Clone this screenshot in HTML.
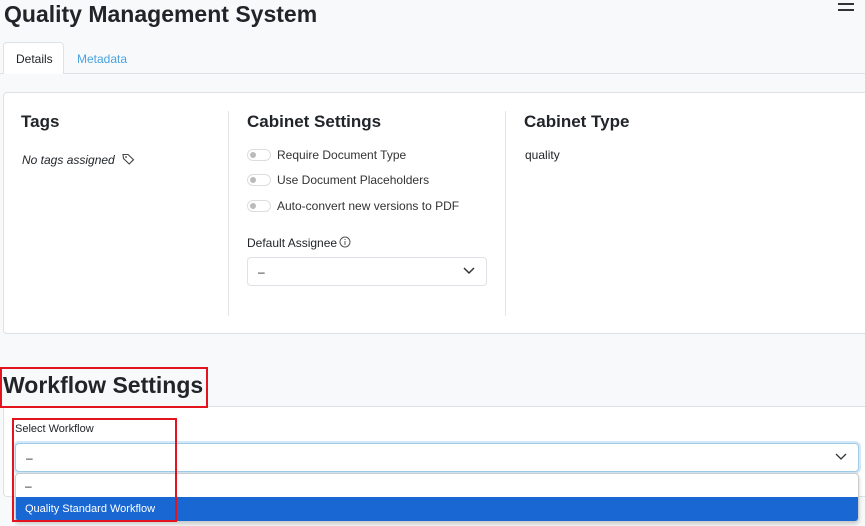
<!DOCTYPE html>
<html><head><style>
*{box-sizing:border-box;margin:0;padding:0}
body{width:865px;height:526px;overflow:hidden;background:#f8f9fa;font-family:"Liberation Sans",sans-serif;color:#212529;position:relative}
.abs{position:absolute}
h1{position:absolute;left:4px;top:1px;font-size:23px;font-weight:600;letter-spacing:0px}
.tog{position:absolute;left:247px;width:24px;height:12px;border:1px solid #ddd;border-radius:7px;background:#fff}
.tog:after{content:"";position:absolute;left:2px;top:2px;width:6px;height:6px;border-radius:50%;background:#bbb}
.lbl{position:absolute;left:277px;font-size:12px;color:#333}
</style></head><body>
<h1>Quality Management System</h1>
<div class="abs" style="left:838px;top:3px;width:16px;height:1.5px;background:#333"></div>
<div class="abs" style="left:838px;top:9px;width:16px;height:1.5px;background:#333"></div>
<div class="abs" style="left:0;top:73px;width:865px;height:1px;background:#dee2e6"></div>
<div class="abs" style="left:3px;top:42px;width:61px;height:32px;background:#fff;border:1px solid #dee2e6;border-bottom:none;border-radius:4px 4px 0 0;font-size:12px;padding:9px 0 0 12px">Details</div>
<div class="abs" style="left:77px;top:52px;font-size:12px;color:#4aa3df">Metadata</div>
<div class="abs" style="left:3px;top:92px;width:870px;height:242px;background:#fff;border:1px solid #dee2e6;border-radius:4px"></div>
<div class="abs" style="left:21px;top:112px;font-size:17px;font-weight:600">Tags</div>
<div class="abs" style="left:22px;top:153px;font-size:12px;font-style:italic">No tags assigned</div>
<svg class="abs" style="left:122px;top:153px" width="13" height="12" viewBox="0 0 13 12"><path d="M1 1.5h5l5.5 5.2-4.3 4.3L1.5 5.5z" fill="none" stroke="#444" stroke-width="1.1"/><circle cx="4" cy="4" r=".9" fill="#444"/></svg>
<div class="abs" style="left:228px;top:111px;width:1px;height:205px;background:#e5e5e5"></div>
<div class="abs" style="left:505px;top:111px;width:1px;height:205px;background:#e5e5e5"></div>
<div class="abs" style="left:247px;top:112px;font-size:17px;font-weight:600">Cabinet Settings</div>
<div class="tog" style="top:149px"></div><div class="lbl" style="top:148px">Require Document Type</div>
<div class="tog" style="top:174px"></div><div class="lbl" style="top:173px">Use Document Placeholders</div>
<div class="tog" style="top:200px"></div><div class="lbl" style="top:199px">Auto-convert new versions to PDF</div>
<div class="abs" style="left:247px;top:236px;font-size:12px">Default Assignee</div>
<svg class="abs" style="left:339px;top:236px" width="12" height="12"><circle cx="6" cy="6" r="5" fill="none" stroke="#555"/><path d="M6 5v4M6 3v1" stroke="#555"/></svg>
<div class="abs" style="left:247px;top:257px;width:240px;height:29px;border:1px solid #dee2e6;border-radius:4px;background:#fff;font-size:12px;padding:7px 0 0 10px">–</div>
<svg class="abs" style="left:463px;top:267px" width="12" height="8"><path d="M1 1l5 5 5-5" fill="none" stroke="#333" stroke-width="1.5"/></svg>
<div class="abs" style="left:524px;top:112px;font-size:17px;font-weight:600">Cabinet Type</div>
<div class="abs" style="left:525px;top:148px;font-size:12px">quality</div>
<div class="abs" style="left:3px;top:372px;font-size:23px;font-weight:600;letter-spacing:0px">Workflow Settings</div>
<div class="abs" style="left:0;top:406px;width:865px;height:1px;background:#dee2e6"></div>
<div class="abs" style="left:3px;top:407px;width:870px;height:90px;background:#fff;border:1px solid #dee2e6;border-top:none;border-radius:0 0 4px 4px"></div>
<div class="abs" style="left:15px;top:423px;font-size:11px">Select Workflow</div>
<div class="abs" style="left:15px;top:443px;width:844px;height:29px;border:1px solid #9ecbe8;border-radius:4px;background:#fff;box-shadow:0 0 0 2px #d4e9f7;font-size:12px;padding:7px 0 0 10px">–</div>
<svg class="abs" style="left:835px;top:453px" width="12" height="8"><path d="M1 1l5 5 5-5" fill="none" stroke="#333" stroke-width="1.3"/></svg>
<div class="abs" style="left:15px;top:473px;width:844px;height:49px;background:#fff;border:1px solid #ccc;border-radius:4px;box-shadow:0 2px 4px rgba(0,0,0,.2);overflow:hidden">
<div style="height:23px;font-size:12px;padding:5px 0 0 9px">–</div>
<div style="height:25px;background:#1967d2;color:#fff;font-size:11px;padding:6px 0 0 9px">Quality Standard Workflow</div></div>
<div class="abs" style="left:0;top:367px;width:208px;height:41px;border:2px solid #e4141e"></div>
<div class="abs" style="left:12px;top:418px;width:165px;height:104px;border:2px solid #e4141e"></div>
</body></html>
